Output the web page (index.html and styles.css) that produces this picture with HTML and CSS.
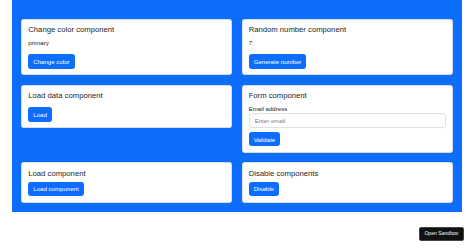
FILE: index.html
```html
<!DOCTYPE html>
<html lang="en">
<head>
    <meta charset="UTF-8">
    <meta name="viewport" content="width=device-width, initial-scale=1.0">
    <title>Components</title>
    <link rel="stylesheet" href="styles.css">
</head>
<body>

    <div class="app">
        <div class="grid">
            <!-- Change color -->
            <div class="card">
                <h5 class="card-title">Change color component</h5>
                <p class="card-text">primary</p>
                <button class="btn">Change color</button>
            </div>
            <!-- Random number -->
            <div class="card">
                <h5 class="card-title">Random number component</h5>
                <p class="card-text">7</p>
                <button class="btn">Generate number</button>
            </div>
            <!-- Load data -->
            <div class="card">
                <h5 class="card-title spaced">Load data component</h5>
                <button class="btn">Load</button>
            </div>
            <!-- Form -->
            <div class="card">
                <h5 class="card-title">Form component</h5>
                <label class="form-label" for="email">Email address</label>
                <input class="form-control" type="email" id="email" placeholder="Enter email">
                <button class="btn">Validate</button>
            </div>
            <!-- Load component -->
            <div class="card">
                <h5 class="card-title">Load component</h5>
                <button class="btn">Load component</button>
            </div>
            <!-- Disable -->
            <div class="card">
                <h5 class="card-title">Disable components</h5>
                <button class="btn">Disable</button>
            </div>
        </div>
    </div>

    <a class="sandbox-btn" href="#">Open Sandbox</a>

</body>
</html>
```

FILE: styles.css
```css
body {
    font-family: "Liberation Sans", Arial, sans-serif;
    margin: 0;
    padding: 0;
    background-color: #fff;
    color: #212529;
}
.app {
    margin: 0 12px;
    padding: 18.7px 9.3px 9.4px;
    background-color: #0d6efd;
}
.grid {
    display: grid;
    grid-template-columns: 1fr 1fr;
    column-gap: 9.3px;
    row-gap: 9.4px;
    align-items: start;
}
.card {
    display: flex;
    flex-direction: column;
    align-items: flex-start;
    background-color: #fff;
    border: 1px solid #d9dce0;
    border-radius: 2.5px;
    padding: 5.6px 6px;
}
.card-title {
    font-size: 7.7px;
    line-height: 9.1px;
    font-weight: 500;
    margin: 0 0 3.5px;
}
.card-title.spaced {
    margin-bottom: 6.9px;
}
.card-text {
    font-size: 6.2px;
    line-height: 9.1px;
    margin: 0.4px 0 6.6px;
}
.btn {
    font-family: inherit;
    font-size: 6.1px;
    line-height: 9.1px;
    color: #fff;
    background-color: #0d6efd;
    border: 1px solid #0d6efd;
    border-radius: 2.4px;
    padding: 1.8px 4px;
    cursor: pointer;
}
.form-label {
    font-size: 6.1px;
    line-height: 9.1px;
    margin-bottom: 0.5px;
}
.form-control {
    box-sizing: border-box;
    width: 100%;
    height: 15px;
    font-family: inherit;
    font-size: 6.1px;
    color: #212529;
    border: 1px solid #dee2e6;
    border-radius: 2.4px;
    padding: 0 5px;
    margin-bottom: 3.4px;
}
.form-control::placeholder {
    color: #7b8188;
}
.sandbox-btn {
    position: fixed;
    right: 10px;
    bottom: 7px;
    font-size: 5.1px;
    line-height: 11.6px;
    color: #fff;
    background-color: #111;
    border: 1px solid #444;
    border-radius: 2px;
    padding: 0 4.6px;
    text-decoration: none;
}
```
